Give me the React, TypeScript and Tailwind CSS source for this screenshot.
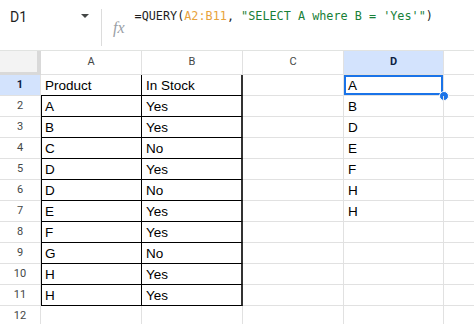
const cols = ["A", "B", "C", "D"];
const data: [string, string, string][] = [
  ["Product", "In Stock", "A"],
  ["A", "Yes", "B"],
  ["B", "Yes", "D"],
  ["C", "No", "E"],
  ["D", "Yes", "F"],
  ["D", "No", "H"],
  ["E", "Yes", "H"],
  ["F", "Yes", ""],
  ["G", "No", ""],
  ["H", "Yes", ""],
  ["H", "Yes", ""],
];

function Cell({ children, className = "" }: { children?: React.ReactNode; className?: string }) {
  return (
    <div className={`flex h-[21px] items-end overflow-hidden border-b border-r px-[4px] pb-[1px] text-[13.5px] leading-[16px] text-black ${className}`}>
      {children}
    </div>
  );
}

export default function App() {
  return (
    <div className="h-[324px] w-[474px] overflow-hidden bg-white" style={{ fontFamily: '"Liberation Sans", Arial, sans-serif' }}>
      {/* Formula bar */}
      <div className="flex h-[51px] border-b border-[#e1e3e1]">
        <div className="flex w-[101px] items-start justify-between pl-[10px] pr-[12px] pt-[9px]">
          <span className="text-[14px] leading-[16px] text-[#1f1f1f]" style={{ fontFamily: "Roboto, sans-serif" }}>D1</span>
          <span className="mt-[5px] h-0 w-0 border-x-[4px] border-t-[4px] border-x-transparent border-t-[#444746]" />
        </div>
        <div className="mt-[9px] h-[37px] w-px bg-[#dcdcdc]" />
        <div className="flex items-start pl-[11px] pt-[20px]">
          <span className="text-[16px] italic leading-[16px] text-[#9aa0a6]" style={{ fontFamily: '"Liberation Serif", serif' }}>
            fx
          </span>
        </div>
        <div className="pl-[10px] pt-[8px] text-[11.8px] leading-[16px] text-[#1f1f1f]" style={{ fontFamily: '"DejaVu Sans Mono", "Liberation Mono", monospace' }}>
          =QUERY(<span className="text-[#e8a33d]">A2:B11</span>, <span className="text-[#188038]">"SELECT A where B = 'Yes'"</span>)
        </div>
      </div>

      {/* Grid */}
      <div className="grid grid-cols-[41px_101px_101px_101px_100px_1fr] border-[#e1e1e1]">
        {/* header row */}
        <div className="h-[24px] border-b-[3px] border-r-[4px] border-[#d9d9d9] bg-[#f3f3f3]" />
        {cols.map((c) => (
          <div
            key={c}
            className={`flex h-[24px] items-center justify-center border-b border-r border-[#e1e1e1] text-[11px] ${
              c === "D" ? "bg-[#d3e3fd] font-bold text-[#0b1f44]" : "text-[#444746]"
            }`}
            style={{ fontFamily: "Roboto, sans-serif" }}
          >
            {c}
          </div>
        ))}
        <div className="h-[24px] border-b border-[#e1e1e1]" />

        {data.map((row, i) => (
          <RowView key={i} n={i + 1} row={row} />
        ))}
        <div className="flex h-[21px] items-center justify-center border-r border-[#e1e1e1] text-[11px] text-[#444746]" style={{ fontFamily: "Roboto, sans-serif" }}>
          12
        </div>
        <div className="border-r border-[#e1e1e1]" />
        <div className="border-r border-[#e1e1e1]" />
        <div className="border-r border-[#e1e1e1]" />
        <div className="border-r border-[#e1e1e1]" />
        <div />
      </div>
    </div>
  );
}

function RowView({ n, row }: { n: number; row: [string, string, string] }) {
  const first = n === 1;
  return (
    <>
      <div
        className={`flex h-[21px] items-center justify-center border-b border-r border-[#e1e1e1] text-[11px] ${
          first ? "bg-[#d3e3fd] font-bold text-[#0b1f44]" : "text-[#444746]"
        }`}
        style={{ fontFamily: "Roboto, sans-serif" }}
      >
        {n}
      </div>
      <Cell className={`border-black ${first ? "" : "shadow-[inset_1px_0_0_#000]"}`}>{row[0]}</Cell>
      <Cell className="border-b-black border-r-2 border-r-[#333]">{row[1]}</Cell>
      <Cell className="border-[#e1e1e1]" />
      <div className="relative">
        <Cell className={first ? "border-[#e1e1e1] shadow-[inset_0_0_0_2px_#1a73e8]" : "border-[#e1e1e1]"}>{row[2]}</Cell>
        {first && <span className="absolute bottom-[-5px] right-[-5px] h-[10px] w-[10px] rounded-full border border-white bg-[#1a73e8]" />}
      </div>
      <div className="h-[21px] border-b border-[#e1e1e1]" />
    </>
  );
}
